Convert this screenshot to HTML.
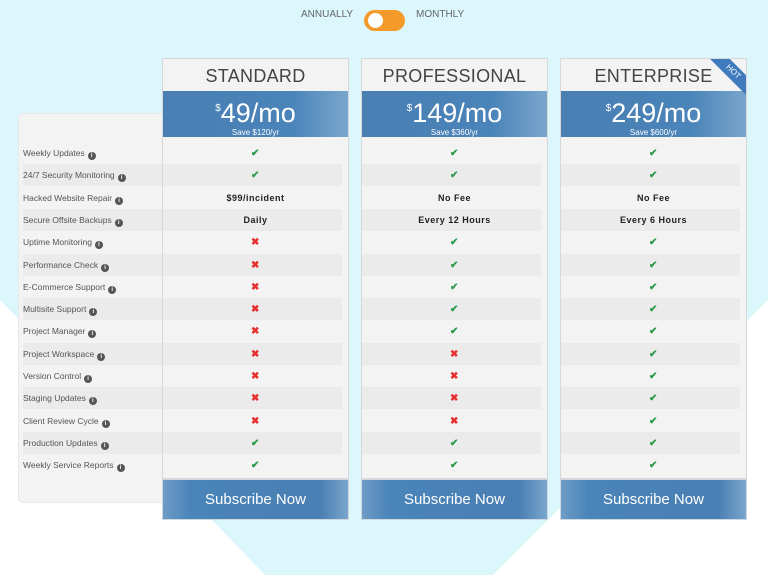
<!DOCTYPE html>
<html><head><style>
*{margin:0;padding:0;box-sizing:border-box}
body{width:768px;height:575px;overflow:hidden;position:relative;background:#fff;font-family:"Liberation Sans",sans-serif}
#bg{position:absolute;left:0;top:0}
.toggle{position:absolute;top:6px;left:0;width:768px;font-size:10px;color:#666;}
.toggle span{position:absolute;top:3px}
.sw{position:absolute;left:364px;top:4px;width:41px;height:21px;border-radius:11px;background:#f39a2b}
.sw:after{content:"";position:absolute;left:4px;top:3px;width:15px;height:15px;border-radius:50%;background:#fff}
.feat{position:absolute;left:18px;top:113px;width:150px;height:390px;background:#f3f3f3;border-radius:5px;border:1px solid #e8e8e8}
.row{position:absolute;height:22px;background:#ebebeb}
.lbl{position:absolute;left:23px;font-size:8.5px;color:#555;line-height:22px}
.i{display:inline-block;width:8px;height:8px;border-radius:50%;background:#555;color:#fff;font-size:6px;line-height:8px;text-align:center;font-weight:bold;vertical-align:-1px;margin-left:3px}
.card{position:absolute;top:58px;width:187px;height:421px;background:#f3f3f3;border:1px solid #d8d8d8;overflow:hidden}
.card h2{height:32px;text-align:center;font-weight:normal;font-size:18px;color:#444;line-height:34px;letter-spacing:.3px}
.price{height:46px;background:linear-gradient(90deg,#4a7fb3 0%,#4a84b9 70%,#7aa6cc 100%);color:#fff;text-align:center}
.price b{display:block;font-weight:normal;font-size:27px;line-height:32px;padding-top:2px}
.price b sup{font-size:10px;vertical-align:11px}
.price small{display:block;font-size:8px;line-height:8px}
.btn{position:absolute;top:479px;width:187px;height:41px;background:linear-gradient(90deg,#6e9cc6 0%,#4a84b9 15%,#4a7fb3 85%,#7aa6cc 100%);color:#fff;font-size:15px;text-align:center;line-height:40px;border:1px solid #cfd8e0}
.cell{position:absolute;width:187px;text-align:center;line-height:22px;font-size:9px;color:#222;font-weight:bold;letter-spacing:.5px}
.y{color:#2a9a4a;font-size:10px}
.n{color:#e53030;font-size:10px}
.hot{position:absolute;right:-22px;top:6px;width:70px;height:14px;background:#3f7bbd;color:#fff;font-size:8px;text-align:center;line-height:14px;transform:rotate(45deg)}
</style></head><body>
<svg id="bg" width="768" height="575"><polygon points="0,0 768,0 768,300 493,575 265,575 0,300" fill="#dcf7fc"/></svg>
<div class="toggle"><span style="left:301px">ANNUALLY</span><div class="sw"></div><span style="left:416px">MONTHLY</span></div>
<div class="feat"></div>
<div class="card" style="left:162px"><h2>STANDARD</h2><div class="price"><b><sup>$</sup>49/mo</b><small>Save $120/yr</small></div></div>
<div class="card" style="left:361px"><h2>PROFESSIONAL</h2><div class="price"><b><sup>$</sup>149/mo</b><small>Save $360/yr</small></div></div>
<div class="card" style="left:560px"><h2>ENTERPRISE</h2><div class="price"><b><sup>$</sup>249/mo</b><small>Save $600/yr</small></div><div class="hot">HOT</div></div>
<div id="rows"></div>
<div class="btn" style="left:162px">Subscribe Now</div>
<div class="btn" style="left:361px">Subscribe Now</div>
<div class="btn" style="left:560px">Subscribe Now</div>
<div id="cells"></div>
<script>
var L=["Weekly Updates","24/7 Security Monitoring","Hacked Website Repair","Secure Offsite Backups","Uptime Monitoring","Performance Check","E-Commerce Support","Multisite Support","Project Manager","Project Workspace","Version Control","Staging Updates","Client Review Cycle","Production Updates","Weekly Service Reports"];
var D=[["y","y","y"],["y","y","y"],["$99/incident","No Fee","No Fee"],["Daily","Every 12 Hours","Every 6 Hours"],["n","y","y"],["n","y","y"],["n","y","y"],["n","y","y"],["n","y","y"],["n","n","y"],["n","n","y"],["n","n","y"],["n","n","y"],["y","y","y"],["y","y","y"]];
var r="",c="",X=[162,361,560];
var seg=[[23,139],[163,179],[362,179],[561,179]];
for(var i=0;i<15;i++){var t=142+i*22.3;
if(i%2)for(var s=0;s<4;s++)r+='<div class="row" style="top:'+t+'px;left:'+seg[s][0]+'px;width:'+seg[s][1]+'px"></div>';
c+='<div class="lbl" style="top:'+t+'px">'+L[i]+'<span class="i">i</span></div>';
for(var j=0;j<3;j++){var v=D[i][j];var h=v=="y"?'<span class="y">✔</span>':v=="n"?'<span class="n">✖</span>':v;
c+='<div class="cell" style="left:'+X[j]+'px;top:'+t+'px">'+h+'</div>';}}
document.getElementById("rows").innerHTML=r;document.getElementById("cells").innerHTML=c;
</script>
</body></html>
